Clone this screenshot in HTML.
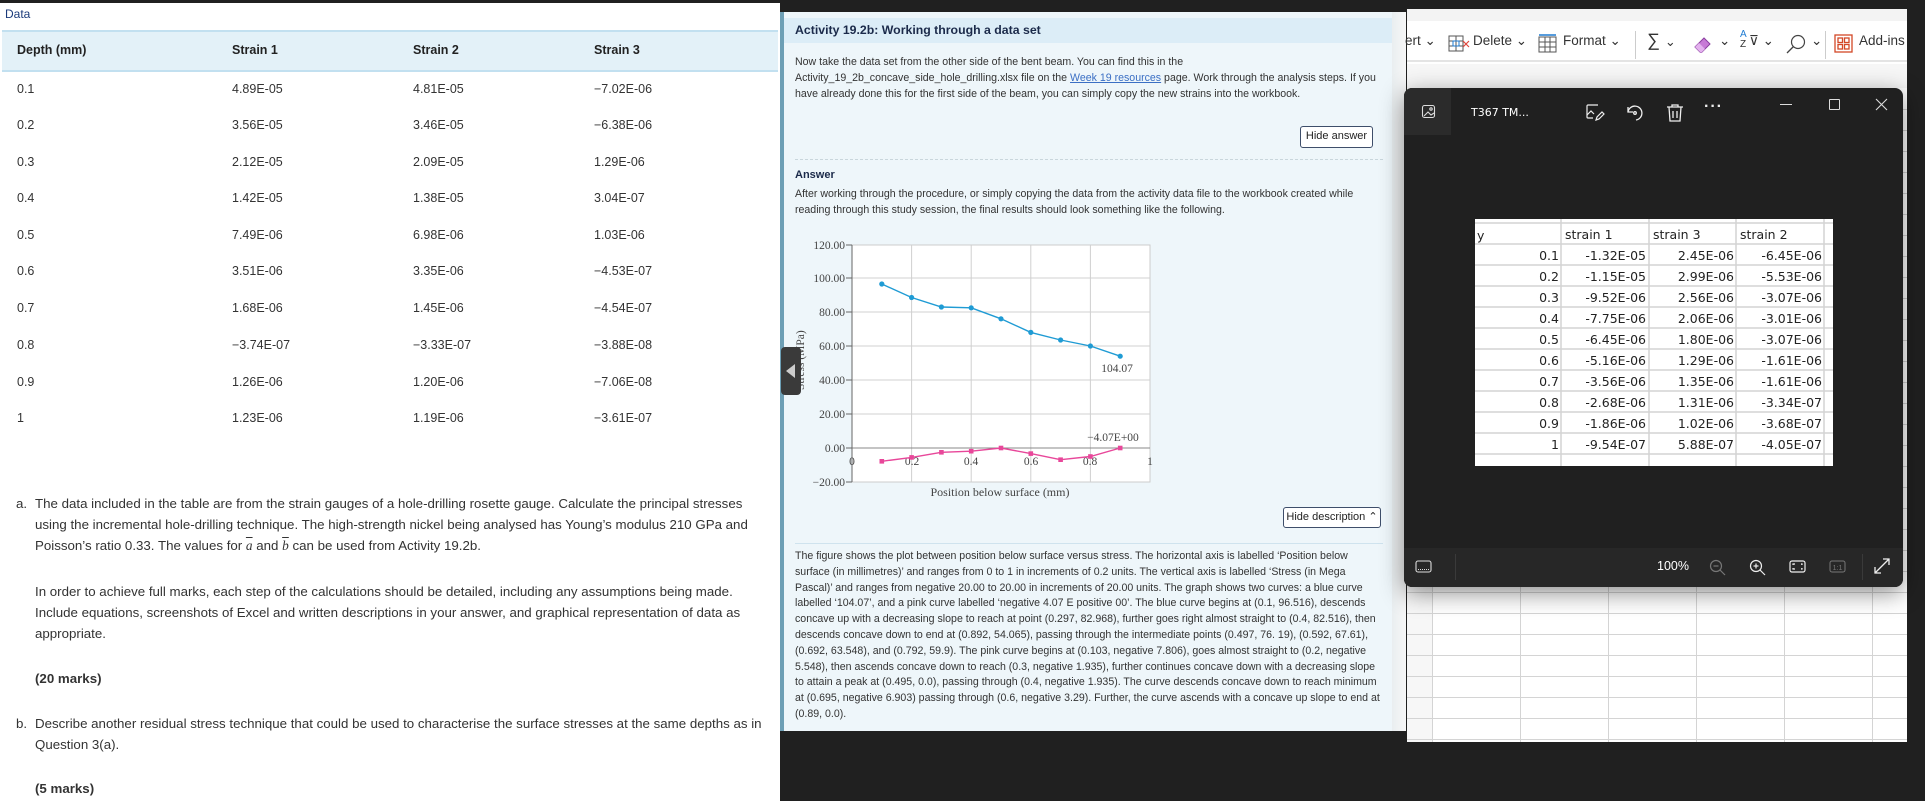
<!DOCTYPE html>
<html><head><meta charset="utf-8">
<style>
*{margin:0;padding:0;box-sizing:border-box}
body{width:1925px;height:801px;background:#202020;position:relative;overflow:hidden;font-family:"Liberation Sans",Arial,sans-serif;color:#333}
.a{position:absolute;white-space:nowrap}
#left{position:absolute;left:0;top:3px;width:780px;height:798px;background:#fff}
.th{font-weight:bold;font-size:12.5px;color:#222}
.td{font-size:12.5px;color:#333}
#mid{position:absolute;left:780px;top:12px;width:612px;height:719px;background:#eef6fa;border-left:4px solid #6d9fb5}
.p{font-size:10.6px;color:#333;line-height:15.8px}
.btn{position:absolute;border:1.5px solid #3e4e6a;border-radius:3px;background:#fff;font-size:11px;color:#222;text-align:center}
#xl{position:absolute;left:1407px;top:9px;width:500px;height:733px;background:#fff}
.rb{font-size:13.5px;color:#333;font-family:"Liberation Sans","DejaVu Sans",sans-serif}
#pv{position:absolute;left:1404px;top:88px;width:499px;height:499px;background:#202020;border-radius:8px;box-shadow:0 6px 24px rgba(0,0,0,.45);overflow:hidden}
.pt{font-size:14.5px;color:#222;font-family:"DejaVu Sans","Liberation Sans",sans-serif}
</style></head><body>

<div id="left">
<div class="a" style="left:5px;top:4px;font-size:12px;color:#1a3a7a">Data</div>
<div class="a" style="left:2px;top:27px;width:776px;height:42px;background:#e3f1f8;border-top:2px solid #c2e0f0;border-bottom:2px solid #c2e0f0"></div>
<div class="a th" style="left:17px;top:40px">Depth (mm)</div>
<div class="a th" style="left:232px;top:40px">Strain 1</div>
<div class="a th" style="left:413px;top:40px">Strain 2</div>
<div class="a th" style="left:594px;top:40px">Strain 3</div>

<div class="a td" style="left:17px;top:79px">0.1</div><div class="a td" style="left:232px;top:79px">4.89E-05</div><div class="a td" style="left:413px;top:79px">4.81E-05</div><div class="a td" style="left:594px;top:79px">−7.02E-06</div>
<div class="a td" style="left:17px;top:115px">0.2</div><div class="a td" style="left:232px;top:115px">3.56E-05</div><div class="a td" style="left:413px;top:115px">3.46E-05</div><div class="a td" style="left:594px;top:115px">−6.38E-06</div>
<div class="a td" style="left:17px;top:152px">0.3</div><div class="a td" style="left:232px;top:152px">2.12E-05</div><div class="a td" style="left:413px;top:152px">2.09E-05</div><div class="a td" style="left:594px;top:152px">1.29E-06</div>
<div class="a td" style="left:17px;top:188px">0.4</div><div class="a td" style="left:232px;top:188px">1.42E-05</div><div class="a td" style="left:413px;top:188px">1.38E-05</div><div class="a td" style="left:594px;top:188px">3.04E-07</div>
<div class="a td" style="left:17px;top:225px">0.5</div><div class="a td" style="left:232px;top:225px">7.49E-06</div><div class="a td" style="left:413px;top:225px">6.98E-06</div><div class="a td" style="left:594px;top:225px">1.03E-06</div>
<div class="a td" style="left:17px;top:261px">0.6</div><div class="a td" style="left:232px;top:261px">3.51E-06</div><div class="a td" style="left:413px;top:261px">3.35E-06</div><div class="a td" style="left:594px;top:261px">−4.53E-07</div>
<div class="a td" style="left:17px;top:298px">0.7</div><div class="a td" style="left:232px;top:298px">1.68E-06</div><div class="a td" style="left:413px;top:298px">1.45E-06</div><div class="a td" style="left:594px;top:298px">−4.54E-07</div>
<div class="a td" style="left:17px;top:335px">0.8</div><div class="a td" style="left:232px;top:335px">−3.74E-07</div><div class="a td" style="left:413px;top:335px">−3.33E-07</div><div class="a td" style="left:594px;top:335px">−3.88E-08</div>
<div class="a td" style="left:17px;top:372px">0.9</div><div class="a td" style="left:232px;top:372px">1.26E-06</div><div class="a td" style="left:413px;top:372px">1.20E-06</div><div class="a td" style="left:594px;top:372px">−7.06E-08</div>
<div class="a td" style="left:17px;top:408px">1</div><div class="a td" style="left:232px;top:408px">1.23E-06</div><div class="a td" style="left:413px;top:408px">1.19E-06</div><div class="a td" style="left:594px;top:408px">−3.61E-07</div>

<div style="position:absolute;left:16px;top:490px;font-size:13.3px;line-height:21px;color:#333;white-space:nowrap">
<div style="position:absolute;left:0;top:0">a.</div>
<div style="position:absolute;left:19px;top:0">The data included in the table are from the strain gauges of a hole-drilling rosette gauge. Calculate the principal stresses<br>using the incremental hole-drilling technique. The high-strength nickel being analysed has Young’s modulus 210 GPa and<br>Poisson’s ratio 0.33. The values for <i style="font-family:'Liberation Serif',serif;text-decoration:overline">a</i> and <i style="font-family:'Liberation Serif',serif;text-decoration:overline">b</i> can be used from Activity 19.2b.</div>
<div style="position:absolute;left:19px;top:88px">In order to achieve full marks, each step of the calculations should be detailed, including any assumptions being made.<br>Include equations, screenshots of Excel and written descriptions in your answer, and graphical representation of data as<br>appropriate.</div>
<div style="position:absolute;left:19px;top:175px;font-weight:bold">(20 marks)</div>
<div style="position:absolute;left:0;top:220px">b.</div>
<div style="position:absolute;left:19px;top:220px">Describe another residual stress technique that could be used to characterise the surface stresses at the same depths as in<br>Question 3(a).</div>
<div style="position:absolute;left:19px;top:285px;font-weight:bold">(5 marks)</div>
</div>
</div>

<div id="mid">
<div class="a" style="left:0;top:6px;width:608px;height:25px;background:#dcedf7"></div>
<div class="a" style="left:11px;top:11px;font-size:12.3px;font-weight:bold;color:#1b2a4a">Activity 19.2b: Working through a data set</div>
<div class="a p" style="left:11px;top:43px">Now take the data set from the other side of the bent beam. You can find this in the<br>Activity_19_2b_concave_side_hole_drilling.xlsx file on the <span style="color:#3b6fc4;text-decoration:underline">Week 19 resources</span> page. Work through the analysis steps. If you<br>have already done this for the first side of the beam, you can simply copy the new strains into the workbook.</div>
<div class="btn" style="left:516px;top:114px;width:73px;height:22px;line-height:19px">Hide answer</div>
<div class="a" style="left:11px;top:147px;width:588px;border-top:1px dashed #c9d6dc"></div>
<div class="a" style="left:11px;top:157px;font-size:11px;font-weight:bold;color:#1b2a4a">Answer</div>
<div class="a p" style="left:11px;top:175px">After working through the procedure, or simply copying the data from the activity data file to the workbook created while<br>reading through this study session, the final results should look something like the following.</div>
<div class="btn" style="left:499px;top:495px;width:98px;height:21px;line-height:18px">Hide description ⌃</div>
<div class="a" style="left:11px;top:531px;width:588px;border-top:1px solid #cfe3ee"></div>
<div class="a p" style="left:11px;top:537px">The figure shows the plot between position below surface versus stress. The horizontal axis is labelled ‘Position below<br>surface (in millimetres)’ and ranges from 0 to 1 in increments of 0.2 units. The vertical axis is labelled ‘Stress (in Mega<br>Pascal)’ and ranges from negative 20.00 to 20.00 in increments of 20.00 units. The graph shows two curves: a blue curve<br>labelled ‘104.07’, and a pink curve labelled ‘negative 4.07 E positive 00’. The blue curve begins at (0.1, 96.516), descends<br>concave up with a decreasing slope to reach at point (0.297, 82.968), further goes right almost straight to (0.4, 82.516), then<br>descends concave down to end at (0.892, 54.065), passing through the intermediate points (0.497, 76. 19), (0.592, 67.61),<br>(0.692, 63.548), and (0.792, 59.9). The pink curve begins at (0.103, negative 7.806), goes almost straight to (0.2, negative<br>5.548), then ascends concave down to reach (0.3, negative 1.935), further continues concave down with a decreasing slope<br>to attain a peak at (0.495, 0.0), passing through (0.4, negative 1.935). The curve descends concave down to reach minimum<br>at (0.695, negative 6.903) passing through (0.6, negative 3.29). Further, the curve ascends with a concave up slope to end at<br>(0.89, 0.0).</div>
</div>
<div class="a" style="left:1392px;top:12px;width:14px;height:719px;background:linear-gradient(90deg,#e9eef0,#f7f7f7)"></div>

<svg style="position:absolute;left:0;top:0" width="1925" height="801">
<g font-family="Liberation Serif,serif" font-size="11.5" fill="#444">
<rect x="852" y="245" width="298" height="237" fill="#fff" stroke="#ccc"/>
<g stroke="#d0d0d0" stroke-width="1">
<line x1="911.6" y1="245" x2="911.6" y2="482"/><line x1="971.2" y1="245" x2="971.2" y2="482"/><line x1="1030.8" y1="245" x2="1030.8" y2="482"/><line x1="1090.4" y1="245" x2="1090.4" y2="482"/>
<line x1="852" y1="278" x2="1150" y2="278"/><line x1="852" y1="312" x2="1150" y2="312"/><line x1="852" y1="346" x2="1150" y2="346"/><line x1="852" y1="380" x2="1150" y2="380"/><line x1="852" y1="414" x2="1150" y2="414"/>
</g>
<line x1="852" y1="448" x2="1150" y2="448" stroke="#888"/>
<line x1="852" y1="245" x2="852" y2="482" stroke="#666"/>
<g stroke="#666"><line x1="846" y1="245" x2="852" y2="245"/><line x1="846" y1="278" x2="852" y2="278"/><line x1="846" y1="312" x2="852" y2="312"/><line x1="846" y1="346" x2="852" y2="346"/><line x1="846" y1="380" x2="852" y2="380"/><line x1="846" y1="414" x2="852" y2="414"/><line x1="846" y1="448" x2="852" y2="448"/><line x1="846" y1="482" x2="852" y2="482"/></g>
<g text-anchor="end"><text x="845" y="249">120.00</text><text x="845" y="282">100.00</text><text x="845" y="316">80.00</text><text x="845" y="350">60.00</text><text x="845" y="384">40.00</text><text x="845" y="418">20.00</text><text x="845" y="452">0.00</text><text x="845" y="486">−20.00</text></g>
<g text-anchor="middle"><text x="852" y="465">0</text><text x="912" y="465">0.2</text><text x="971" y="465">0.4</text><text x="1031" y="465">0.6</text><text x="1090" y="465">0.8</text><text x="1150" y="465">1</text></g>
<text x="1000" y="496" text-anchor="middle" font-size="12">Position below surface (mm)</text>
<text transform="translate(804,390) rotate(-90)" font-size="11.5">Stress (MPa)</text>
<polyline fill="none" stroke="#1f9bd4" stroke-width="1.4" points="881.8,284 911.6,297.5 941.4,307 971.2,307.8 1001,318.8 1030.8,332.4 1060.6,340 1090.4,346 1120.2,356.2"/>
<g fill="#1f9bd4"><circle cx="881.8" cy="284" r="2.6"/><circle cx="911.6" cy="297.5" r="2.6"/><circle cx="941.4" cy="307" r="2.6"/><circle cx="971.2" cy="307.8" r="2.6"/><circle cx="1001" cy="318.8" r="2.6"/><circle cx="1030.8" cy="332.4" r="2.6"/><circle cx="1060.6" cy="340" r="2.6"/><circle cx="1090.4" cy="346" r="2.6"/><circle cx="1120.2" cy="356.2" r="2.6"/></g>
<polyline fill="none" stroke="#e8479a" stroke-width="1.4" points="881.8,461.3 911.6,457.4 941.4,452.3 971.2,451.2 1001,448 1030.8,453.6 1060.6,459.7 1090.4,456.5 1120.2,448"/>
<g fill="#e8479a"><rect x="879.5" y="459" width="4.6" height="4.6"/><rect x="909.3" y="455.1" width="4.6" height="4.6"/><rect x="939.1" y="450" width="4.6" height="4.6"/><rect x="968.9" y="448.9" width="4.6" height="4.6"/><rect x="998.7" y="445.7" width="4.6" height="4.6"/><rect x="1028.5" y="451.3" width="4.6" height="4.6"/><rect x="1058.3" y="457.4" width="4.6" height="4.6"/><rect x="1088.1" y="454.2" width="4.6" height="4.6"/><rect x="1117.9" y="445.7" width="4.6" height="4.6"/></g>
<text x="1117" y="372" text-anchor="middle">104.07</text>
<text x="1113" y="441" text-anchor="middle">−4.07E+00</text>
</g>
<rect x="781" y="347" width="20" height="48" rx="4" fill="#3a3a3a"/>
<polygon points="786,371 795,364 795,378" fill="#ccc"/>
</svg>

<div id="xl">
<div class="a" style="left:0;top:0;width:500px;height:12px;background:#f3f3f3"></div>
<div class="a" style="left:0;top:12px;width:500px;height:41px;background:#fff;border-bottom:2px solid #e4e4e4"></div>
<div class="a" style="left:0;top:55px;width:500px;height:24px;background:#f6f6f6"></div>
<div class="a" style="left:0;top:79px;width:500px;height:654px;background-color:#fff;background-image:repeating-linear-gradient(180deg,transparent 0,transparent 20px,#d4d4d4 20px,#d4d4d4 21px),repeating-linear-gradient(90deg,transparent 0,transparent 87px,#d4d4d4 87px,#d4d4d4 88px);background-position:26px 1px"></div>
<div class="a" style="left:0;top:79px;width:26px;height:654px;background:repeating-linear-gradient(180deg,#f7f7f7 0,#f7f7f7 20px,#d4d4d4 20px,#d4d4d4 21px);background-position:0 1px;border-right:1px solid #d4d4d4"></div>
<div class="a rb" style="left:-2px;top:24px">ert ⌄</div>
<svg class="a" style="left:41px;top:26px" width="22" height="18"><g fill="none" stroke="#555" stroke-width="1"><rect x="1" y="1" width="14" height="15"/><line x1="1" y1="6" x2="15" y2="6"/><line x1="1" y1="11" x2="15" y2="11"/><line x1="8" y1="1" x2="8" y2="16"/></g><rect x="5" y="6" width="6" height="5" fill="none" stroke="#1e7bd2"/><path d="M15 6l6 6M21 6l-6 6" stroke="#e0453a" stroke-width="1.2"/></svg>
<div class="a rb" style="left:66px;top:24px">Delete ⌄</div>
<svg class="a" style="left:131px;top:24px" width="20" height="20"><g fill="none" stroke="#555"><rect x="1" y="4" width="17" height="15"/><line x1="1" y1="9" x2="18" y2="9"/><line x1="1" y1="14" x2="18" y2="14"/><line x1="7" y1="4" x2="7" y2="19"/><line x1="12" y1="4" x2="12" y2="19"/></g><line x1="1" y1="2" x2="18" y2="2" stroke="#1e7bd2" stroke-width="1.4"/></svg>
<div class="a rb" style="left:156px;top:24px">Format ⌄</div>
<div class="a" style="left:228px;top:22px;width:1px;height:28px;background:#ccc"></div>
<div class="a rb" style="left:240px;top:21px;font-size:18px">∑ <span style="font-size:13px">⌄</span></div>
<svg class="a" style="left:286px;top:26px" width="22" height="18"><path d="M2 12l9-9 6 6-9 9z" fill="#c77ad6" stroke="#8a3ea0"/><path d="M2 12l4-4 6 6-4 4z" fill="#e3b1ee"/></svg>
<div class="a rb" style="left:312px;top:24px">⌄</div>
<div class="a rb" style="left:333px;top:21px;font-size:10px;line-height:10px;color:#1e7bd2">A<br><span style="color:#333">Z</span></div>
<div class="a rb" style="left:342px;top:24px">⊽ ⌄</div>
<svg class="a" style="left:378px;top:24px" width="22" height="22"><circle cx="13" cy="9" r="6.5" fill="none" stroke="#444" stroke-width="1.2"/><line x1="8.5" y1="13.5" x2="2" y2="20" stroke="#444" stroke-width="1.3"/></svg>
<div class="a rb" style="left:404px;top:24px">⌄</div>
<div class="a" style="left:418px;top:22px;width:1px;height:28px;background:#ccc"></div>
<svg class="a" style="left:427px;top:25px" width="20" height="20"><g fill="none" stroke="#d24726" stroke-width="1.3"><rect x="1" y="1" width="17" height="17"/><rect x="4" y="4" width="4.5" height="4.5"/><rect x="10.5" y="4" width="4.5" height="4.5"/><rect x="4" y="10.5" width="4.5" height="4.5"/><rect x="10.5" y="10.5" width="4.5" height="4.5"/></g></svg>
<div class="a rb" style="left:452px;top:24px">Add-ins</div>
</div>

<div id="pv">
<div class="a" style="left:0;top:0;width:47px;height:47px;background:#2b2b2b"></div>
<svg class="a" style="left:17px;top:16px" width="16" height="16"><g fill="none" stroke="#ddd" stroke-width="1.1"><rect x="1.5" y="1.5" width="12" height="12" rx="2"/><path d="M3 12l4-4 3 3 3-2"/><circle cx="10" cy="5" r="1.2"/></g></svg>
<div class="a" style="left:67px;top:18px;font-size:11px;color:#fff;font-family:'DejaVu Sans',sans-serif">T367 TM...</div>
<svg class="a" style="left:181px;top:15px" width="20" height="20"><g fill="none" stroke="#eee" stroke-width="1.2"><path d="M13 2H3a1 1 0 0 0-1 1v11a1 1 0 0 0 1 1h5"/><path d="M2 12l4-4 3 3"/><path d="M11 17l1-3 5-5 2 2-5 5z"/></g></svg>
<svg class="a" style="left:221px;top:15px" width="20" height="20"><g fill="none" stroke="#eee" stroke-width="1.3"><path d="M3 9a7 7 0 1 1 8 8"/><path d="M3 4v5h5"/><circle cx="10" cy="10" r="1.3"/></g></svg>
<svg class="a" style="left:261px;top:15px" width="20" height="20"><g fill="none" stroke="#eee" stroke-width="1.3"><path d="M2 4h16M7 4V2h6v2M4 4l1 14h10l1-14M8 8v7M12 8v7"/></g></svg>
<div class="a" style="left:300px;top:10px;color:#eee;font-size:16px;font-weight:bold;letter-spacing:1px">···</div>
<div class="a" style="left:376px;top:16px;width:12px;height:1px;background:#ddd"></div>
<div class="a" style="left:425px;top:11px;width:11px;height:11px;border:1.2px solid #ddd;border-radius:1px"></div>
<svg class="a" style="left:471px;top:10px" width="13" height="13"><path d="M1 1l11 11M12 1L1 12" stroke="#ddd" stroke-width="1.1"/></svg>

<div class="a" style="left:71px;top:131px;width:358px;height:247px;background:#fff"></div>
<svg class="a" style="left:71px;top:131px" width="358" height="247"><g stroke="#d4d4d4" stroke-width="1.5"><line x1="86" y1="0" x2="86" y2="247"/><line x1="174" y1="0" x2="174" y2="247"/><line x1="261" y1="0" x2="261" y2="247"/><line x1="349" y1="0" x2="349" y2="247"/>
<line x1="0" y1="4" x2="358" y2="4"/><line x1="0" y1="25" x2="358" y2="25"/><line x1="0" y1="46" x2="358" y2="46"/><line x1="0" y1="67" x2="358" y2="67"/><line x1="0" y1="88" x2="358" y2="88"/><line x1="0" y1="109" x2="358" y2="109"/><line x1="0" y1="130" x2="358" y2="130"/><line x1="0" y1="151" x2="358" y2="151"/><line x1="0" y1="172" x2="358" y2="172"/><line x1="0" y1="193" x2="358" y2="193"/><line x1="0" y1="214" x2="358" y2="214"/><line x1="0" y1="235" x2="358" y2="235"/></g>
<g font-family="DejaVu Sans,Liberation Sans,sans-serif" font-size="12.5" fill="#222">
<text x="2" y="21">y</text><text x="90" y="20">strain 1</text><text x="178" y="20">strain 3</text><text x="265" y="20">strain 2</text>
<g text-anchor="end">
<text x="84" y="41">0.1</text><text x="171" y="41">-1.32E-05</text><text x="259" y="41">2.45E-06</text><text x="347" y="41">-6.45E-06</text>
<text x="84" y="62">0.2</text><text x="171" y="62">-1.15E-05</text><text x="259" y="62">2.99E-06</text><text x="347" y="62">-5.53E-06</text>
<text x="84" y="83">0.3</text><text x="171" y="83">-9.52E-06</text><text x="259" y="83">2.56E-06</text><text x="347" y="83">-3.07E-06</text>
<text x="84" y="104">0.4</text><text x="171" y="104">-7.75E-06</text><text x="259" y="104">2.06E-06</text><text x="347" y="104">-3.01E-06</text>
<text x="84" y="125">0.5</text><text x="171" y="125">-6.45E-06</text><text x="259" y="125">1.80E-06</text><text x="347" y="125">-3.07E-06</text>
<text x="84" y="146">0.6</text><text x="171" y="146">-5.16E-06</text><text x="259" y="146">1.29E-06</text><text x="347" y="146">-1.61E-06</text>
<text x="84" y="167">0.7</text><text x="171" y="167">-3.56E-06</text><text x="259" y="167">1.35E-06</text><text x="347" y="167">-1.61E-06</text>
<text x="84" y="188">0.8</text><text x="171" y="188">-2.68E-06</text><text x="259" y="188">1.31E-06</text><text x="347" y="188">-3.34E-07</text>
<text x="84" y="209">0.9</text><text x="171" y="209">-1.86E-06</text><text x="259" y="209">1.02E-06</text><text x="347" y="209">-3.68E-07</text>
<text x="84" y="230">1</text><text x="171" y="230">-9.54E-07</text><text x="259" y="230">5.88E-07</text><text x="347" y="230">-4.05E-07</text>
</g></g></svg>

<div class="a" style="left:0;top:460px;width:499px;height:39px;background:#272727"></div>
<svg class="a" style="left:11px;top:472px" width="18" height="14"><g fill="none" stroke="#ddd" stroke-width="1.1"><rect x="1" y="1" width="15" height="11" rx="2"/><line x1="3" y1="9.5" x2="14" y2="9.5" stroke-dasharray="1 1"/></g></svg>
<div class="a" style="left:51px;top:466px;width:1px;height:26px;background:#3a3a3a"></div>
<div class="a" style="left:253px;top:471px;font-size:12.5px;color:#fff">100%</div>
<svg class="a" style="left:305px;top:471px" width="18" height="18"><g fill="none" stroke="#777" stroke-width="1.2"><circle cx="7" cy="7" r="5.5"/><line x1="4.5" y1="7" x2="9.5" y2="7"/><line x1="11" y1="11" x2="16" y2="16"/></g></svg>
<svg class="a" style="left:345px;top:471px" width="18" height="18"><g fill="none" stroke="#eee" stroke-width="1.2"><circle cx="7" cy="7" r="5.5"/><line x1="4.5" y1="7" x2="9.5" y2="7"/><line x1="7" y1="4.5" x2="7" y2="9.5"/><line x1="11" y1="11" x2="16" y2="16"/></g></svg>
<svg class="a" style="left:385px;top:472px" width="18" height="14"><g fill="none" stroke="#eee" stroke-width="1.2"><rect x="1" y="1" width="15" height="11" rx="2"/><path d="M4 5V4h2M12 4h1v1M13 8v1h-1M6 9H4V8"/></g></svg>
<svg class="a" style="left:425px;top:472px" width="18" height="14"><rect x="1" y="1" width="15" height="11" rx="2" fill="none" stroke="#777"/><text x="8.5" y="10" font-size="7" fill="#777" text-anchor="middle" font-family="Liberation Sans">1:1</text></svg>
<div class="a" style="left:458px;top:466px;width:1px;height:26px;background:#3a3a3a"></div>
<svg class="a" style="left:469px;top:469px" width="18" height="18"><g fill="none" stroke="#eee" stroke-width="1.3"><path d="M2 16L16 2M10 2h6v6M2 10v6h6"/></g></svg>
</div>

</body></html>
